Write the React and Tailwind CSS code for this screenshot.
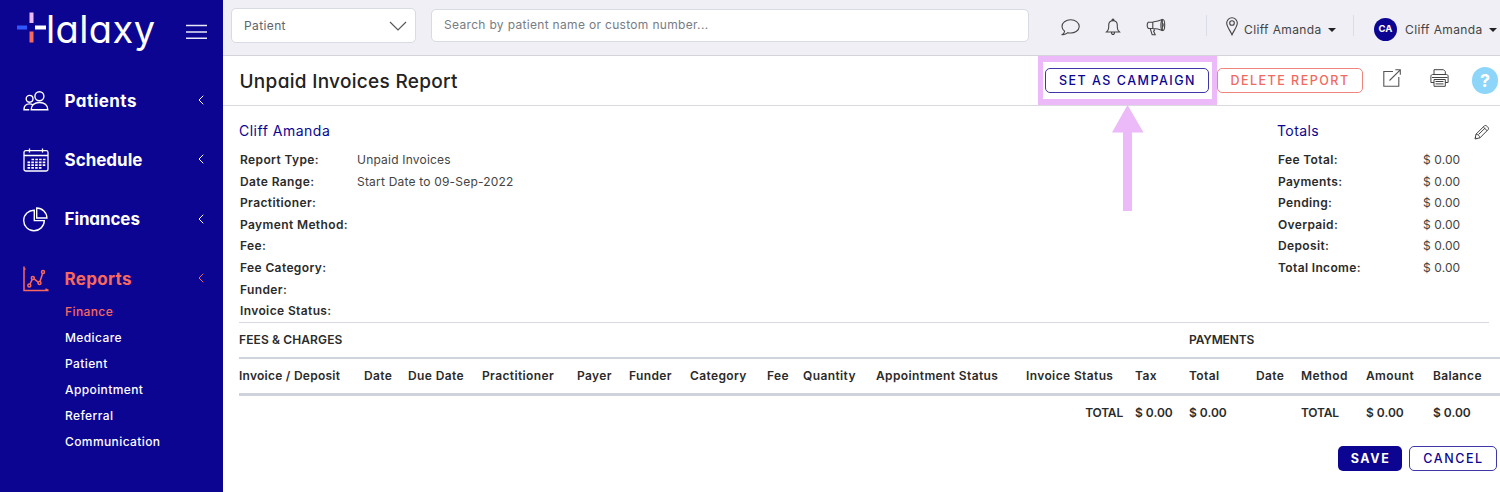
import { ChevronLeft } from 'lucide-react';

const NAV_ITEMS = [
  { label: 'Patients', icon: PatientsIcon, tracking: 'tracking-[0.45px]' },
  { label: 'Schedule', icon: ScheduleIcon, tracking: 'tracking-[0px]' },
  { label: 'Finances', icon: FinancesIcon, tracking: 'tracking-[-0.1px]' },
  { label: 'Reports', icon: ReportsIcon, tracking: 'tracking-[0.3px]', active: true },
];

const REPORT_LINKS = ['Finance', 'Medicare', 'Patient', 'Appointment', 'Referral', 'Communication'];

const DETAILS = [
  ['Report Type:', 'Unpaid Invoices'],
  ['Date Range:', 'Start Date to 09-Sep-2022'],
  ['Practitioner:', ''],
  ['Payment Method:', ''],
  ['Fee:', ''],
  ['Fee Category:', ''],
  ['Funder:', ''],
  ['Invoice Status:', ''],
];

const TOTALS = ['Fee Total:', 'Payments:', 'Pending:', 'Overpaid:', 'Deposit:', 'Total Income:'];

const COLUMNS = [
  'Invoice / Deposit', 'Date', 'Due Date', 'Practitioner', 'Payer', 'Funder', 'Category', 'Fee', 'Quantity',
  'Appointment Status', 'Invoice Status', 'Tax', 'Total', 'Date', 'Method', 'Amount', 'Balance',
];

const GRID = 'grid grid-cols-[125px_44px_74px_95px_52px_61px_77px_36px_73px_150px_109px_54px_67px_45px_65px_67px_67px] whitespace-nowrap';

function PatientsIcon() {
  return (
    <svg width="26" height="20" viewBox="0 0 26 20" fill="none" stroke="currentColor" strokeWidth="1.4">
      <circle cx="16.4" cy="5.3" r="4.5" />
      <circle cx="6.6" cy="7.8" r="3.4" />
      <path d="M8.2 18.7c0-4.6 3.5-7.2 8.3-7.2s8.3 2.6 8.3 7.2zM6.3 18.7H1c0-3.8 2.2-5.8 5.5-5.8 1.3 0 2.4.3 3.3.9" />
    </svg>
  );
}

function ScheduleIcon() {
  return (
    <svg width="26" height="24" viewBox="0 0 26 24" fill="none" stroke="currentColor" strokeWidth="1.3">
      <rect x="1" y="2.7" width="24" height="20.3" rx="1.8" />
      <path d="M1 7.5h24M6.5.5v4M19.5.5v4" />
      <path d="M8.5 11.5h14M4.5 14.3h18M4.5 17.1h18M4.5 19.8h15" strokeWidth="1.7" strokeDasharray="2.6 1.2" />
    </svg>
  );
}

function FinancesIcon() {
  return (
    <svg width="26" height="25" viewBox="0 0 26 25" fill="none" stroke="currentColor" strokeWidth="1.4">
      <path d="M11.3 3.2A10.3 10.3 0 1 0 21.3 13.6H11.3z" />
      <path d="M13.7 1v10h10.2A10.2 10 0 0 0 13.7 1z" />
    </svg>
  );
}

function ReportsIcon() {
  return (
    <svg width="26" height="26" viewBox="0 0 26 26" fill="none" stroke="currentColor" strokeWidth="1.5">
      <path d="M1 .5v24h24.5M.5 3.5l2-.5M22.5 23l3 1.5" />
      <circle cx="6.3" cy="19.5" r="1.5" />
      <circle cx="9.8" cy="12" r="1.5" />
      <circle cx="16.5" cy="17" r="1.5" />
      <circle cx="20" cy="6" r="1.5" />
      <path d="M7 18.1l2.2-4.7M11 12.9l4.2 3.2M17 15.5l2.6-8" />
    </svg>
  );
}

function Logo() {
  return (
    <div className="flex h-[60px] items-start pl-4">
      <svg width="31" height="31" viewBox="0 0 31 31" className="mt-3 shrink-0">
        <path d="M1 15.5h10" stroke="#3158ff" strokeWidth="4" />
        <path d="M19 15.5h11" stroke="#fff" strokeWidth="4" />
        <path d="M15.5.5v10.5" stroke="#ecb9f9" strokeWidth="4" />
        <path d="M15.5 19.5v11" stroke="#f8685d" strokeWidth="4" />
      </svg>
      <span className="-ml-[1px] mt-[6.5px] text-[38px] leading-[45px] tracking-[0.4px] [font-feature-settings:'cv11'] text-white">lalaxy</span>
      <svg width="21" height="17" viewBox="0 0 21 17" className="ml-auto mr-4 mt-6 shrink-0" stroke="#e8e8f6" strokeWidth="1.6">
        <path d="M0 1.5h21M0 8h21M0 14.3h21" />
      </svg>
    </div>
  );
}

function Sidebar() {
  return (
    <aside className="flex h-[492px] w-[223px] shrink-0 flex-col bg-[#0c0591] text-white">
      <Logo />
      <nav className="mt-[11px] flex flex-col">
        {NAV_ITEMS.map(({ label, icon: Icon, tracking, active }) => (
          <a key={label} className={`flex h-[59.4px] items-center pl-[23px] pr-[14.5px] ${active ? 'text-[#f8685d]' : ''}`}>
            <span className="flex w-[41.5px] shrink-0"><Icon /></span>
            <span className={`pt-[1.5px] text-[17px] font-bold [font-feature-settings:'cv11'] ${tracking}`}>{label}</span>
            <ChevronLeft size={16} strokeWidth={1.5} className="-mt-[1.5px] ml-auto" />
          </a>
        ))}
      </nav>
      <ul className="-mt-[9.4px] flex flex-col pl-[65px] text-[12px] font-medium tracking-[0.4px]">
        {REPORT_LINKS.map((link) => (
          <li key={link} className={`h-[26px] leading-[26px] ${link === 'Finance' ? 'text-[#f8685d]' : ''}`}>{link}</li>
        ))}
      </ul>
    </aside>
  );
}

function UserMenu({ name }) {
  return (
    <span className="mt-5 flex items-center leading-5">
      <span className="w-[84px] shrink-0 whitespace-nowrap">{name}</span>
      <span className="-mt-px h-0 w-0 border-x-4 border-t-4 border-x-transparent border-t-[#222]" />
    </span>
  );
}

function TopBar() {
  return (
    <header className="flex h-14 shrink-0 items-start border-b border-[#d4d4da] bg-[#efeff5] pl-2 text-[12px] tracking-[0.38px] text-[#444]">
      <div className="mt-2 flex h-[35px] w-[185px] items-center justify-between rounded-[5px] border border-[#d9dbe3] bg-white pl-3 pr-2 text-[#60646b]">
        Patient
        <svg width="18" height="10" viewBox="0 0 18 10" fill="none" stroke="#555" strokeWidth="1.1">
          <path d="M1 1l8 8 8-8" />
        </svg>
      </div>
      <div className="ml-[15px] mt-[9px] flex h-[33px] w-[598px] items-center rounded-[5px] border border-[#d9dbe3] bg-white pb-px pl-3 tracking-[0.32px] text-[#777c84]">
        Search by patient name or custom number...
      </div>
      <svg width="19" height="17" viewBox="0 0 19 17" className="ml-8 mt-[19px] shrink-0" fill="none" stroke="#444" strokeWidth="1.1">
        <path d="M3.6 12.3C.2 9.8.1 5.5 3.5 2.7 6.9.2 12.3.1 15.6 2.6 19.3 5.5 19 10.1 15.2 12.5 12.8 14 9.8 14.3 6.9 13.7 5.5 14.9 3.4 15.9 1.3 15.6 2.7 14.7 3.5 13.6 3.6 12.3z" />
      </svg>
      <svg width="16" height="18" viewBox="0 0 16 18" className="ml-[25px] mt-[18px] shrink-0" fill="none" stroke="#444" strokeWidth="1.1">
        <path d="M1.5 14h13c-1.5-1.5-2.2-2.5-2.2-4.5V7.2C12.3 4.4 10.5 2.7 8 2.7S3.7 4.4 3.7 7.2v2.3c0 2-.7 3-2.2 4.5zM6.5 14.2c0 3 3 3 3 0M7 2.6c0-2 2-2 2 0" />
      </svg>
      <svg width="20" height="18" viewBox="0 0 20 18" className="ml-[25px] mt-[18px] shrink-0" fill="none" stroke="#444" strokeWidth="1.1">
        <path d="M2.3 4.2l4.5-.2c3.5-.3 6.6-1 9.5-2.4v10.8c-2.9-1.2-6-1.8-9.5-1.9l-4.5-.1C.8 8.8.8 5.8 2.3 4.2zM6.8 4v6.5M4.2 10.5l2 6.3h3l-1.6-3.6.8-.6-.5-2" />
        <ellipse cx="16.8" cy="7" rx="1.9" ry="5.5" />
        <path d="M16 5c1.7.2 1.7 3.7 0 4" />
      </svg>
      <span className="ml-10 mt-[15px] h-[21px] w-px shrink-0 bg-[#dadde5]" />
      <svg width="12" height="19" viewBox="0 0 12 19" className="ml-[19px] mt-[17px] shrink-0" fill="none" stroke="#444" strokeWidth="1.1">
        <path d="M6 17.8C4.3 13.5.7 10 .7 6.1a5.3 5.3 0 0 1 10.6 0C11.3 10 7.7 13.5 6 17.8z" />
        <circle cx="6" cy="6" r="2.3" />
      </svg>
      <div className="ml-[6px]"><UserMenu name="Cliff Amanda" /></div>
      <span className="ml-[17px] mt-[15px] h-[21px] w-px shrink-0 bg-[#dadde5]" />
      <span className="ml-[20px] mt-[18px] flex h-[23px] w-[23px] shrink-0 items-center justify-center rounded-full bg-[#0c0591] text-[9.5px] font-bold tracking-normal text-white">CA</span>
      <div className="ml-2"><UserMenu name="Cliff Amanda" /></div>
    </header>
  );
}

function TitleBar() {
  return (
    <div className="flex h-[50px] shrink-0 items-start border-b border-[#d9d9de] bg-white pl-[16.5px]">
      <h1 className="mt-3 text-[19px] font-medium leading-7 tracking-[0.3px] text-[#222] [font-feature-settings:'cv11']">
        Unpaid Invoices Report
      </h1>
      <div className="relative ml-auto flex h-[49px] w-[179px] shrink-0 items-start border-x-[5px] border-y-[6px] border-[#ecb9f9] bg-white">
        <button className="ml-[2px] mt-[6px] h-[25px] w-[164px] shrink-0 rounded-[5px] border border-[#3d38a6] pl-px text-[12.5px] font-medium leading-[23px] tracking-[1.5px] text-[#0c0591]">
          SET AS CAMPAIGN
        </button>
        <svg width="32" height="106" viewBox="0 0 32 106" className="absolute left-[69px] top-[43px]" fill="#ecb9f9">
          <path d="M15.5 0L31.5 27.5h-11.5v78.5h-9V27.5H0z" />
        </svg>
      </div>
      <button className="mt-3 h-[25px] w-[146px] shrink-0 rounded-[5px] border border-[#f0857d] text-[12.5px] font-medium leading-[23px] tracking-[1.5px] text-[#ef6a61]">
        DELETE REPORT
      </button>
      <svg width="18" height="18" viewBox="0 0 18 18" className="ml-5 mt-[13px] shrink-0" fill="none" stroke="#555" strokeWidth="1.1">
        <path d="M10 2.5H.8v14.7h15V8M6.5 11.5L17.3.8M12.3.7h5v5" />
      </svg>
      <svg width="19" height="18" viewBox="0 0 19 18" className="ml-[28.5px] mt-[13px] shrink-0" fill="none" stroke="#444" strokeWidth="1">
        <path d="M4 5.5V.7h9.5l1.8 1.8v3M4 13.5H.9V7.2c0-1 .7-1.7 1.7-1.7h13.8c1 0 1.7.7 1.7 1.7v6.3H15M4 10.5h11.3v6.8H4zM2 8.5h15.5M5.5 12.5h8M5.5 14.9h8" />
      </svg>
      <span className="ml-[23.5px] mr-[2px] mt-[11px] flex h-[27px] w-[26px] shrink-0 items-center justify-center rounded-full bg-[#8dd6f9] text-[18px] font-bold text-white">?</span>
    </div>
  );
}

function Summary() {
  return (
    <section className="ml-4 mr-[11px] flex h-[217px] shrink-0 justify-between border-b border-[#d8dae0] text-[12px] text-[#444]">
      <div className="pt-4">
        <h2 className="h-[27px] text-[14px] leading-[18px] tracking-[0.5px] text-[#0c0591]">Cliff Amanda</h2>
        <dl className="pl-[1px]">
          {DETAILS.map(([label, value]) => (
            <div key={label} className="flex h-[21.6px] leading-[21px]">
              <dt className="w-[117px] shrink-0 whitespace-nowrap font-semibold tracking-[0.38px] text-[#2b2b2b]">{label}</dt>
              <dd className="whitespace-nowrap tracking-[0.2px]">{value}</dd>
            </div>
          ))}
        </dl>
      </div>
      <div className="w-[212px] pt-4">
        <div className="flex h-[27px] justify-between">
          <h2 className="text-[14px] leading-[18px] tracking-[0.4px] text-[#0c0591]">Totals</h2>
          <svg width="16" height="16" viewBox="0 0 16 16" className="-mr-px mt-[2px]" fill="none" stroke="#444" strokeWidth="1">
            <path d="M1 15l1-4.8L10.5 1.7c1.3-1.2 5 2.2 3.8 3.7L6 13.8zM2 10.2c2 .2 3.5 1.6 4 3.6M9.3 3l3.8 3.7M4.5 10.5L11.2 4M1 13l1.7 1.6" />
          </svg>
        </div>
        <dl className="pl-[1px]">
          {TOTALS.map((label) => (
            <div key={label} className="flex h-[21.6px] leading-[21px]">
              <dt className="w-[145px] whitespace-nowrap font-semibold tracking-[0.35px] text-[#2b2b2b]">{label}</dt>
              <dd className="tracking-[0.1px]">$ 0.00</dd>
            </div>
          ))}
        </dl>
      </div>
    </section>
  );
}

function InvoiceTable() {
  return (
    <section className="ml-4 shrink-0 text-[12px] font-semibold text-[#2b2b2b]">
      <div className={`${GRID} h-9 border-b-2 border-[#cfd3db] leading-[33px]`}>
        <span className="col-span-12 tracking-[0.12px]">FEES &amp; CHARGES</span>
        <span className="col-span-5 tracking-[-0.15px]">PAYMENTS</span>
      </div>
      <div className={`${GRID} h-[37px] border-b-[3px] border-[#cfd2da] leading-[33px] tracking-[0.38px]`}>
        {COLUMNS.map((column, idx) => (
          <span key={idx} className={idx === 0 ? 'tracking-[0.25px]' : ''}>{column}</span>
        ))}
      </div>
      <div className={`${GRID} h-[34px] leading-[33px]`}>
        <span className="col-span-11 pr-3 text-right tracking-[-0.2px]">TOTAL</span>
        <span>$ 0.00</span>
        <span className="col-span-2">$ 0.00</span>
        <span className="tracking-[-0.2px]">TOTAL</span>
        <span>$ 0.00</span>
        <span>$ 0.00</span>
      </div>
    </section>
  );
}

function App() {
  return (
    <div className="flex h-[492px] w-[1500px] overflow-hidden bg-white font-['Inter',sans-serif]">
      <Sidebar />
      <main className="flex w-[1277px] flex-col">
        <TopBar />
        <TitleBar />
        <Summary />
        <InvoiceTable />
        <div className="mr-[3px] mt-4 flex justify-end gap-[7px] text-[12.5px] leading-[23px] tracking-[1.6px]">
          <button className="h-[25px] w-[64px] rounded-[5px] bg-[#0c0591] pl-px font-bold text-white">SAVE</button>
          <button className="h-[25px] w-[88px] rounded-[5px] border border-[#3d38a6] pl-px font-medium text-[#0c0591]">CANCEL</button>
        </div>
      </main>
    </div>
  );
}

export default App;
